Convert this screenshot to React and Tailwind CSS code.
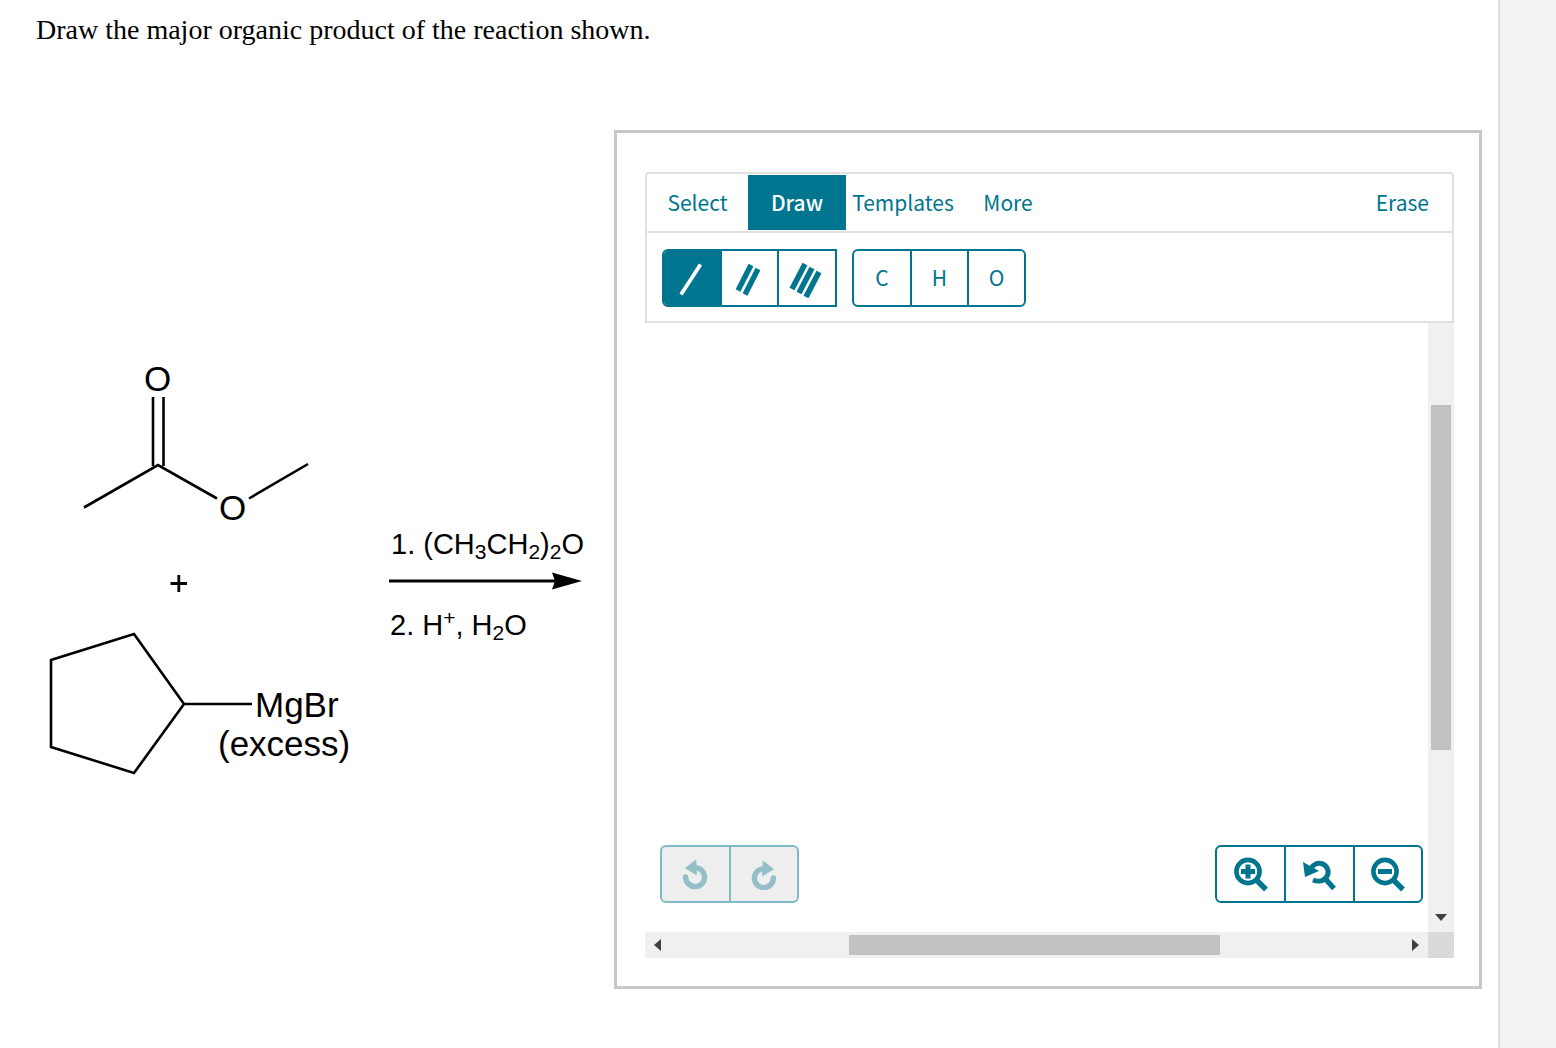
import React from "react";

function Bond({ lines }) {
  return (
    <svg viewBox="0 0 40 40" className="h-10 w-10 shrink-0" stroke="currentColor" fill="none" aria-hidden="true">
      {lines.map(([x1, y1, x2, y2, w], i) => (
        <line key={i} x1={x1} y1={y1} x2={x2} y2={y2} strokeWidth={w} />
      ))}
    </svg>
  );
}

const bonds = [
  { label: "Single bond", active: true, lines: [[9, 36.5, 28.5, 6.5, 3.8]] },
  { label: "Double bond", lines: [[8, 32.5, 21, 7, 5.4], [15, 36.5, 28, 11, 5.4]] },
  {
    label: "Triple bond",
    lines: [[5, 31, 18, 6, 5.6], [12, 35, 25, 10, 5.6], [19, 39, 32, 14, 5.6]],
  },
];

function Turn({ flip }) {
  return (
    <svg viewBox="0 0 28 32" className="h-8 w-7" aria-hidden="true">
      <g transform={flip ? "translate(28 2) scale(-1 1)" : "translate(-1 1)"}>
        <path d="M4.6 18 A9.5 9.5 0 1 0 14 8.6" fill="none" stroke="currentColor" strokeWidth="5.4" strokeLinecap="round" />
        <path d="M4.6 9.2 L14.8 1.2 L15.4 15.6 Z" fill="currentColor" stroke="currentColor" strokeWidth="1" strokeLinejoin="round" />
      </g>
    </svg>
  );
}

function ZoomIcon({ kind }) {
  return (
    <svg viewBox="0 0 36 36" className="h-9 w-9" fill="none" stroke="currentColor" aria-hidden="true">
      {kind === "reset" ? (
        <>
          <path d="M8.5 13 C11 8 16 6.3 20 7.7 C26 10 27.8 16.5 24.5 21 C21.8 25 16.5 26.1 11 24" strokeWidth="5" />
          <path d="M1 6 L3 21 L17 15 Z" fill="currentColor" stroke="none" />
          <path d="M23.5 23 L32 32.5" strokeWidth="5.2" />
        </>
      ) : (
        <>
          <circle cx="15" cy="15.5" r="11.6" strokeWidth="4.6" />
          <path d="M23.5 24 L33 33.5" strokeWidth="5.4" />
          <path d={kind === "in" ? "M8 15.5 H22 M15 8.5 V22.5" : "M8 15.5 H22"} strokeWidth="5" />
        </>
      )}
    </svg>
  );
}

function Arrow({ dir }) {
  const d = { left: "M8 0 V12 L1 6 Z", right: "M4 0 V12 L11 6 Z", down: "M0 3 H12 L6 10 Z" }[dir];
  return (
    <svg viewBox="0 0 12 12" className="h-3 w-3" fill="#404040" aria-hidden="true">
      <path d={d} />
    </svg>
  );
}

function Reaction() {
  return (
    <svg
      viewBox="36 350 560 440"
      className="w-[560px]"
      role="img"
      aria-label="Reaction scheme"
      fontFamily='"Liberation Sans", Arial, sans-serif'
      fill="#000"
    >
      <g fill="none" stroke="#000" strokeWidth="2.6">
        <path d="M153 397 V466 M163.5 397 V466" />
        <path d="M84 507.5 L158 465 L217 498.5" />
        <path d="M249 498.5 L308 464" />
        <path d="M134 634 L184 704 L134 773 L51 747 V660 Z" />
        <path d="M184 704 H252" />
        <path d="M389 581 H560" strokeWidth="3" />
      </g>
      <path d="M552 572.5 L582 581 L552 589.5 L555 581 Z" />
      <g fontSize="35">
        <text x="144" y="391">O</text>
        <text x="219" y="520">O</text>
        <text x="255" y="717">MgBr</text>
        <text x="218" y="756">(excess)</text>
      </g>
      <path d="M170.5 583.5 H187 M178.8 575 V592" stroke="#000" strokeWidth="2.8" />
      <g fontSize="29">
        <text x="391" y="554">
          1. (CH<tspan dy="5" fontSize="21">3</tspan>
          <tspan dy="-5">CH</tspan>
          <tspan dy="5" fontSize="21">2</tspan>
          <tspan dy="-5">)</tspan>
          <tspan dy="5" fontSize="21">2</tspan>
          <tspan dy="-5">O</tspan>
        </text>
        <text x="390" y="635">
          2. H<tspan dy="-10" fontSize="21">+</tspan>
          <tspan dy="10">, H</tspan>
          <tspan dy="5" fontSize="21">2</tspan>
          <tspan dy="-5">O</tspan>
        </text>
      </g>
    </svg>
  );
}

function Editor() {
  return (
    <section className="flex min-w-0 flex-1 flex-col border-[3px] border-[#c8c8c8] pt-[39px] pr-[25px] pb-7 pl-7 font-['Noto_Sans_CJK_SC',sans-serif] text-[#00758f]">
      <nav className="flex h-[61px] items-center rounded-t border-2 border-[#e0e0e0] text-[21px]">
        <button className="h-[55px] w-[101px] text-center">Select</button>
        <button className="h-[55px] w-[98px] bg-[#00758f] font-medium text-white">Draw</button>
        <button className="h-[55px] w-[114px] text-center">Templates</button>
        <button className="h-[55px] w-24 text-center">More</button>
        <button className="ml-auto h-[55px] px-[23px]">Erase</button>
      </nav>
      <div className="flex h-[90px] gap-[15px] border-2 border-t-0 border-[#e0e0e0] pt-4 pl-[15px]">
        <div className="flex h-[58px] divide-x-2 divide-[#00758f] overflow-hidden rounded-l-md border-2 border-[#00758f]">
          {bonds.map((b) => (
            <button
              key={b.label}
              aria-label={b.label}
              className={
                b.active
                  ? "flex w-[58px] items-center justify-center bg-[#00758f] text-white"
                  : "flex w-[57px] items-center justify-center last:w-14"
              }
            >
              <Bond lines={b.lines} />
            </button>
          ))}
        </div>
        <div className="flex h-[58px] divide-x-2 divide-[#00758f] rounded-md border-2 border-[#00758f] text-[21px]">
          {["C", "H", "O"].map((a) => (
            <button key={a} className="w-[57px] first:w-[58px] last:w-[55px]">
              {a}
            </button>
          ))}
        </div>
      </div>
      <div className="flex h-[609px]">
        <div className="flex flex-1 items-end justify-between pr-[5px] pb-[29px] pl-[15px]">
          <div className="flex h-[58px] divide-x-2 divide-[#80bac7] rounded-md border-2 border-[#80bac7] bg-[#eeeeee] text-[#94bfc9]">
            <button aria-label="Undo" className="flex w-[69px] items-center justify-center">
              <Turn />
            </button>
            <button aria-label="Redo" className="flex w-[66px] items-center justify-center">
              <Turn flip />
            </button>
          </div>
          <div className="flex h-[58px] divide-x-2 divide-[#00758f] rounded-md border-2 border-[#00758f]">
            {["in", "reset", "out"].map((k) => (
              <button
                key={k}
                aria-label={"Zoom " + k}
                className="flex w-[69px] items-center justify-center last:w-[66px]"
              >
                <ZoomIcon kind={k} />
              </button>
            ))}
          </div>
        </div>
        <div className="flex w-[26px] flex-col items-center bg-[#f0f0f0]">
          <div className="flex-[82]" />
          <div className="w-5 flex-[345] bg-[#c1c1c1]" />
          <div className="flex flex-[182] items-end">
            <button aria-label="Scroll down" className="pb-[9px]">
              <Arrow dir="down" />
            </button>
          </div>
        </div>
      </div>
      <div className="flex h-[26px]">
        <div className="flex flex-1 items-center bg-[#f0f0f0]">
          <div className="flex flex-[204]">
            <button aria-label="Scroll left" className="pl-2">
              <Arrow dir="left" />
            </button>
          </div>
          <div className="h-5 flex-[371] bg-[#c1c1c1]" />
          <div className="flex flex-[208] justify-end">
            <button aria-label="Scroll right" className="pr-2">
              <Arrow dir="right" />
            </button>
          </div>
        </div>
        <div className="w-[26px] bg-[#dadada]" />
      </div>
    </section>
  );
}

export default function App() {
  return (
    <div className="flex min-h-screen bg-white">
      <main className="min-w-0 flex-1 pr-4 pl-9">
        <h1 className="pt-[14px] font-['Liberation_Serif',serif] text-[28px] leading-8 text-black">
          Draw the major organic product of the reaction shown.
        </h1>
        <div className="mt-[84px] flex">
          <div className="flex w-[578px] shrink-0 items-start pt-[220px]">
            <Reaction />
          </div>
          <Editor />
        </div>
      </main>
      <aside className="w-[58px] shrink-0 border-l-2 border-[#dcdcdc] bg-[#f2f2f2]" />
    </div>
  );
}
